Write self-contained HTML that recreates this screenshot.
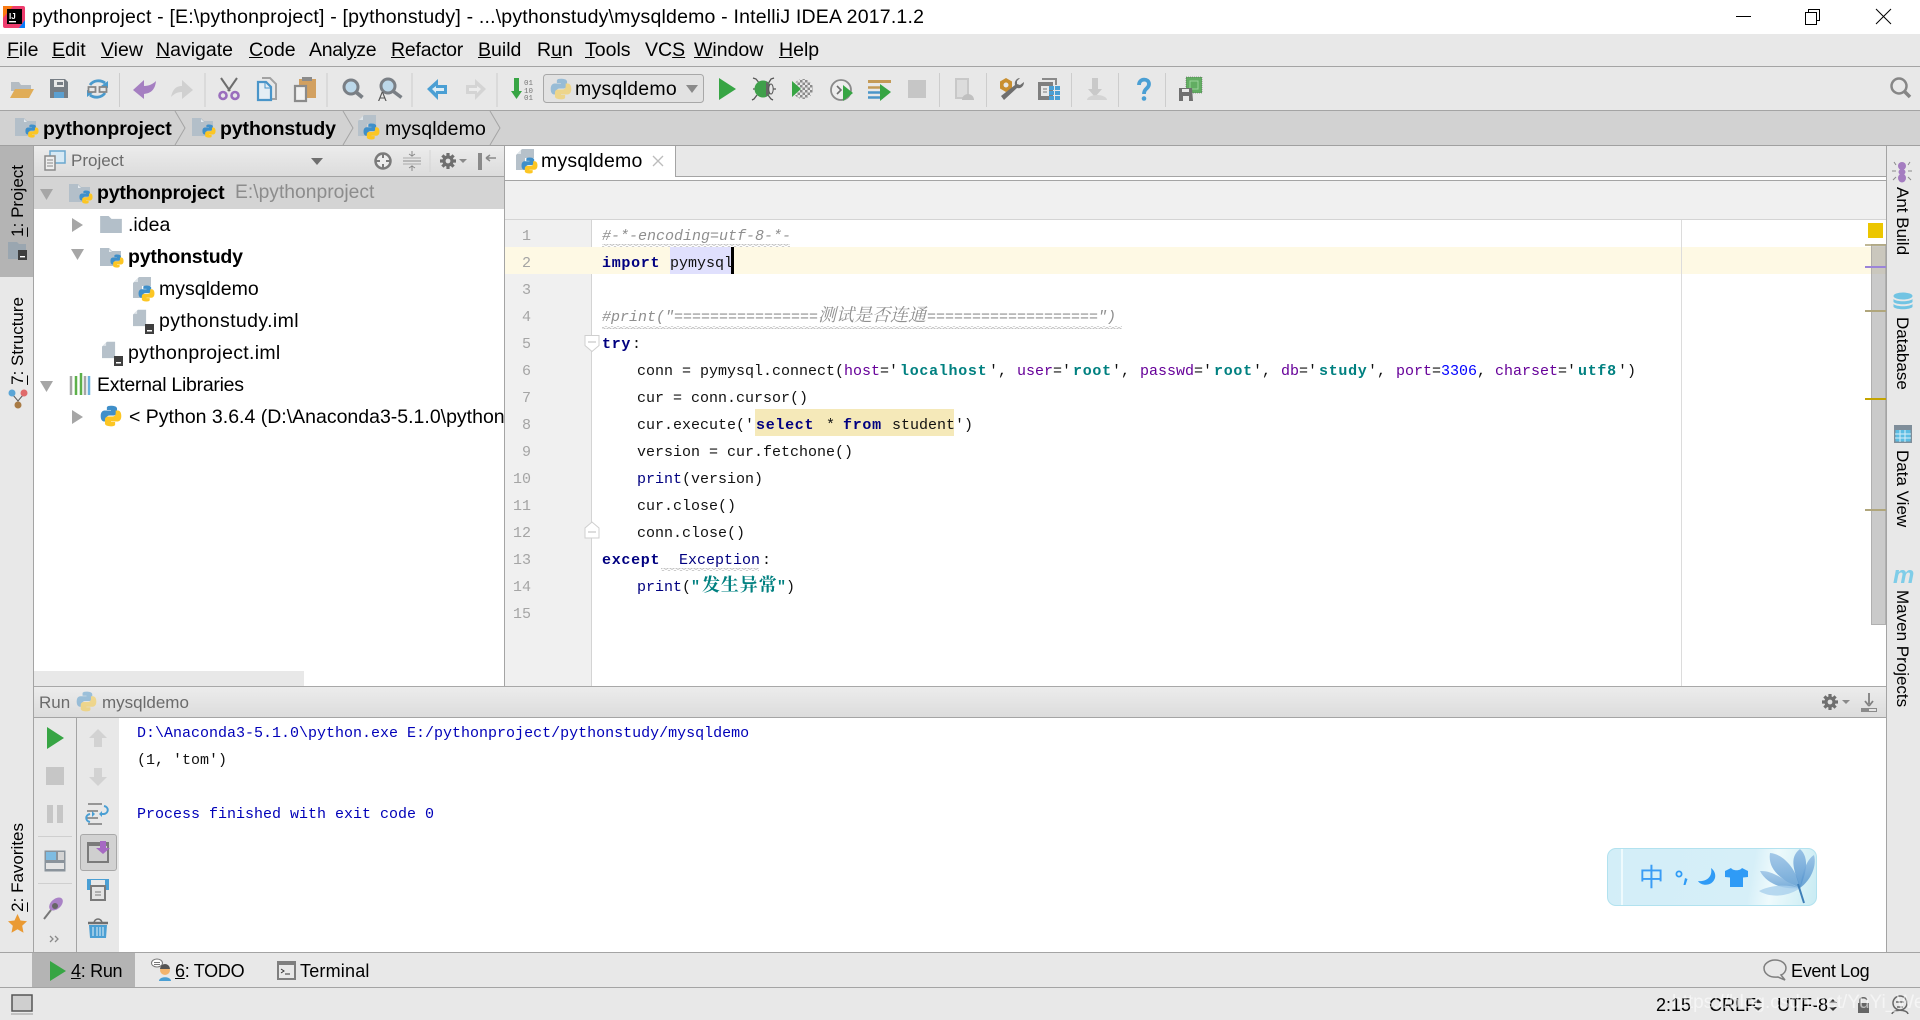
<!DOCTYPE html>
<html><head><meta charset="utf-8"><title>pythonproject</title>
<style>
html,body{margin:0;padding:0;width:1920px;height:1020px;overflow:hidden;background:#e8e8e8}
#a{position:absolute;left:0;top:0;width:1920px;height:1020px;overflow:hidden;font-family:"Liberation Sans","Noto Sans CJK SC",sans-serif;color:#000}
.x{position:absolute}
.t{position:absolute;white-space:pre;font-size:19.5px;line-height:26px;height:26px}
.s{font-size:17px;color:#6b6b6b}
.m{font-size:18px}
.v{position:absolute;white-space:pre;font-size:17px;line-height:20px;writing-mode:vertical-rl}
.vl{transform:rotate(180deg)}
.b{font-weight:bold}
.r{position:absolute;left:0;width:1920px;height:27px}
.r span,.o{position:absolute;white-space:pre;font:15px/27px "Liberation Mono","Noto Serif CJK SC",monospace;color:#111}
.r span{top:2px}
.r .n{color:#a5a5a5;text-align:right;left:500px;width:31px}
.r .k{color:#000080;font-weight:bold;letter-spacing:.7px}
.r .g{color:#008080;font-weight:bold;letter-spacing:.7px}
.r .p{color:#660099}
.r .d{color:#0000ff}
.r .c{color:#8f8f8f;font-style:italic}
.r .f{color:#000080}
.o{color:#0000b8}
u{text-decoration:underline}
</style></head><body><div id="a">

<!-- regions -->
<div class="x" style="left:0;top:0;width:1920px;height:34px;background:#fff"></div>
<div class="x" style="left:0;top:66px;width:1920px;height:1px;background:#a4a4a4"></div>
<div class="x" style="left:0;top:110px;width:1920px;height:1px;background:#a4a4a4"></div>
<div class="x" style="left:0;top:111px;width:1920px;height:34px;background:#d2d2d2"></div>
<div class="x" style="left:0;top:145px;width:1920px;height:1px;background:#a0a0a0"></div>
<!-- left stripe -->
<div class="x" style="left:33px;top:146px;width:1px;height:806px;background:#a4a4a4"></div>
<div class="x" style="left:0;top:146px;width:33px;height:131px;background:#b4b4b4"></div>
<!-- project -->
<div class="x" style="left:34px;top:146px;width:470px;height:30px;background:linear-gradient(#ececec,#dcdcdc)"></div>
<div class="x" style="left:34px;top:176px;width:470px;height:1px;background:#a4a4a4"></div>
<div class="x" style="left:34px;top:177px;width:470px;height:509px;background:#fff"></div>
<div class="x" style="left:34px;top:177px;width:470px;height:32px;background:#d4d4d4"></div>
<div class="x" style="left:34px;top:671px;width:270px;height:15px;background:#e8e8e8"></div>
<div class="x" style="left:504px;top:146px;width:1px;height:540px;background:#a4a4a4"></div>
<!-- editor -->
<div class="x" style="left:505px;top:146px;width:1381px;height:30px;background:#e8e8e8"></div>
<div class="x" style="left:505px;top:176px;width:1381px;height:1px;background:#a4a4a4"></div>
<div class="x" style="left:505px;top:177px;width:1381px;height:3px;background:#fff"></div>
<div class="x" style="left:505px;top:146px;width:170px;height:34px;background:#fff"></div>
<div class="x" style="left:675px;top:146px;width:1px;height:31px;background:#a4a4a4"></div>
<div class="x" style="left:505px;top:180px;width:1381px;height:1px;background:#a4a4a4"></div>
<div class="x" style="left:505px;top:181px;width:1381px;height:38px;background:#f0f0f0"></div>
<div class="x" style="left:505px;top:219px;width:1381px;height:1px;background:#d4d4d4"></div>
<div class="x" style="left:505px;top:220px;width:1381px;height:466px;background:#fff"></div>
<div class="x" style="left:505px;top:220px;width:86px;height:466px;background:#f0f0f0"></div>
<div class="x" style="left:591px;top:220px;width:1px;height:466px;background:#d4d4d4"></div>
<div class="x" style="left:505px;top:247px;width:1381px;height:27px;background:#fef9e4"></div>
<div class="x" style="left:1681px;top:220px;width:1px;height:466px;background:#dcdcdc"></div>
<div class="x" style="left:670px;top:247px;width:61px;height:27px;background:#e0e0fd"></div>
<div class="x" style="left:755px;top:409px;width:199px;height:27px;background:#f5e9b9"></div>
<div class="x" style="left:731px;top:247px;width:3px;height:27px;background:#000"></div>
<!-- scrollbar -->
<div class="x" style="left:1871px;top:244px;width:15px;height:381px;background:rgba(150,150,150,.5);outline:1px solid rgba(130,130,130,.35);outline-offset:-1px"></div>
<div class="x" style="left:1868px;top:223px;width:15px;height:15px;background:#ecc600"></div>
<div class="x" style="left:1865px;top:244px;width:21px;height:2px;background:#b0a67c;opacity:.8"></div>
<div class="x" style="left:1865px;top:266px;width:21px;height:2px;background:#9b84d8"></div>
<div class="x" style="left:1865px;top:310px;width:21px;height:2px;background:#b0a67c"></div>
<div class="x" style="left:1865px;top:398px;width:21px;height:2px;background:#c4a400"></div>
<div class="x" style="left:1865px;top:509px;width:21px;height:2px;background:#b0a67c"></div>
<!-- right stripe -->
<div class="x" style="left:1886px;top:146px;width:1px;height:806px;background:#a4a4a4"></div>
<!-- run -->
<div class="x" style="left:34px;top:686px;width:1852px;height:1px;background:#a8a8a8"></div>
<div class="x" style="left:34px;top:687px;width:1852px;height:30px;background:linear-gradient(#ececec,#dcdcdc)"></div>
<div class="x" style="left:34px;top:717px;width:1852px;height:1px;background:#a4a4a4"></div>
<div class="x" style="left:119px;top:718px;width:1767px;height:234px;background:#fff"></div>
<div class="x" style="left:76px;top:718px;width:1px;height:234px;background:#a4a4a4"></div>
<div class="x" style="left:38px;top:836px;width:34px;height:1px;background:#cfcfcf"></div>
<div class="x" style="left:38px;top:883px;width:34px;height:1px;background:#cfcfcf"></div>
<div class="x" style="left:80px;top:834px;width:35px;height:35px;background:#d2d2d2;border:1px solid #a8a8a8;border-radius:3px"></div>
<!-- bottom -->
<div class="x" style="left:0;top:952px;width:1920px;height:1px;background:#a4a4a4"></div>
<div class="x" style="left:32px;top:953px;width:103px;height:34px;background:#b4b4b4"></div>
<div class="x" style="left:0;top:987px;width:1920px;height:1px;background:#a4a4a4"></div>

<!-- IME -->
<div class="x" style="left:1607px;top:848px;width:208px;height:56px;border:1px solid #b2e2ef;border-radius:9px;background:linear-gradient(100deg,#d3eef8 0%,#d6eff8 68%,#eefafc 78%,#c8ebf3 100%);overflow:hidden">
  <div class="x" style="left:13px;top:0;width:2px;height:56px;background:#eefafd"></div>
</div>

<!-- ICONS -->
<svg class="x" style="left:0;top:0" width="1920" height="1020" viewBox="0 0 1920 1020">
<defs>
<symbol id="py" viewBox="0 0 16 16">
  <path fill="#3f8fc9" d="M7.9.5C4.7.5 5 1.9 5 1.9V3.6H8V4H3.4S.5 3.800.5 8s2.600 4 2.600 4H4.600V10.100S4.500 7.600 7 7.600h3.100s2.300 0 2.300-2.300V2.600S12.700.5 7.900.5Z"/>
  <path fill="#fcc624" transform="rotate(180 8 8)" d="M7.900.5C4.700.5 5 1.900 5 1.900V3.600H8V4H3.400S.5 3.800.5 8s2.600 4 2.600 4H4.600V10.100S4.500 7.600 7 7.600h3.100s2.300 0 2.300-2.300V2.600S12.700.5 7.900.5Z"/>
</symbol>
<symbol id="fo" viewBox="0 0 23 18"><path fill="#b3bfc9" d="M0 0h9l3 3h11v15H0z"/></symbol>
<symbol id="fpy" viewBox="0 0 24 20">
  <path fill="#b3bfc9" d="M0 0h9l3 3h9v12h-6v3H0z"/><path fill="#e6ebef" d="M9 1l3 3H9z"/>
  <use href="#py" x="10" y="6" width="14" height="14"/>
</symbol>
<symbol id="fi" viewBox="0 0 22 25">
  <path fill="#b6c1ca" d="M6 0h10v20H0V6z"/><path fill="#dfe5e9" d="M5 1v4H1z"/>
</symbol>
<symbol id="fipy" viewBox="0 0 22 25">
  <path fill="#b6c1ca" d="M6 0h12v9H9v12H0V6z"/><path fill="#dfe5e9" d="M5 1v4H1z"/>
  <use href="#py" x="5" y="8" width="17" height="17"/>
</symbol>
<symbol id="iml" viewBox="0 0 22 25">
  <use href="#fi" width="18" height="22"/>
  <rect x="12" y="15" width="9" height="10" fill="#3f3f3f"/><rect x="14" y="21" width="5" height="1.500" fill="#fff"/>
</symbol>
<symbol id="gear" viewBox="0 0 20 20">
  <circle cx="10" cy="10" r="7" fill="#6f6f6f"/>
  <path d="M10 0v20M0 10h20M3 3l14 14M17 3L3 17" stroke="#6f6f6f" stroke-width="4"/>
  <circle cx="10" cy="10" r="3" fill="#e2e2e2"/>
</symbol>
<pattern id="sq" width="6" height="3" patternUnits="userSpaceOnUse"><path d="M0 2.500 3 .5 6 2.500" fill="none" stroke="#bdbdbd"/></pattern>
<pattern id="chk" width="5" height="5" patternUnits="userSpaceOnUse"><rect width="2.500" height="2.500" fill="#8a8a8a"/><rect x="2.500" y="2.500" width="2.500" height="2.500" fill="#8a8a8a"/></pattern>
<linearGradient id="pe" x1="0" y1="0" x2="0" y2="1"><stop offset="0" stop-color="#8db9e2"/><stop offset="1" stop-color="#4d8fcc"/></linearGradient>
<linearGradient id="sc" x1="0" y1="0" x2="0" y2="1"><stop offset="0" stop-color="#6fb0dc"/><stop offset="1" stop-color="#3d8ec4"/></linearGradient>
</defs>

<!-- app icon -->
<rect x="3" y="6" width="22" height="22" rx="2" fill="#ee3d6e"/><path d="M3 6h10L3 18z" fill="#f97a12"/><path d="M25 6v14l-6 8h6z" fill="#087cfa"/>
<rect x="7" y="9" width="15" height="15" fill="#000"/><rect x="9" y="21" width="7" height="1.400" fill="#fff"/>
<text x="9" y="19" font-family="Liberation Sans,sans-serif" font-size="8" font-weight="bold" fill="#fff">IJ</text>
<!-- window controls -->
<path d="M1736 16.500h15" stroke="#000" stroke-width="1"/>
<path d="M1805.500 12.500h11v12h-11zM1808.500 12V9.500h11v11h-3" fill="none" stroke="#000"/>
<path d="M1876 9l15 15M1891 9l-15 15" stroke="#000" stroke-width="1"/>

<!-- toolbar seps -->
<g stroke="#cdcdcd"><path d="M119.500 73v34M205 73v34M327 73v34M412 73v34M497 73v34M939.500 73v34M986.500 73v34M1071.500 73v34M1118.500 73v34M1165.500 73v34"/></g>
<!-- open -->
<path fill="#b4bcc3" d="M11 82h8l2 3h10v6H11z"/><path fill="#e0ad58" d="M15 89h19l-5 9H10z"/>
<!-- save -->
<path fill="#767d84" d="M50 79h15l3 3v16H50z"/><rect x="54" y="80" width="10" height="7" fill="#e8e8e8"/><rect x="57" y="82" width="6" height="3" fill="#767d84"/><rect x="54" y="92" width="10" height="6" fill="#5b9fd0"/>
<!-- sync -->
<path d="M90 85a10 9 0 0 1 15-2M105 93a10 9 0 0 1-15 2" fill="none" stroke="#4a9acd" stroke-width="2.800"/><path d="M101 86l7-5v7zM94 92l-7 5v-7z" fill="#4a9acd"/><path d="M88.500 87h7v5h-7zM99.500 87h7v5h-7z" fill="#e8e8e8" stroke="#858585" stroke-width="1.800"/>
<!-- undo/redo -->
<path fill="#a57fc1" d="M133 90l11-10v6c5 0 9-2 12-5-1 9-5 12-12 13v5z"/>
<path fill="#d0d0d0" d="M193 90l-11-10v6c-6 0-9 3-11 11 3-3 6-5 11-5v7z"/>
<!-- cut -->
<path d="M221 78l9 13M237 78l-9 13" stroke="#6d6d6d" stroke-width="2"/><circle cx="223" cy="95.500" r="3.500" fill="#e8e8e8" stroke="#9a6ebd" stroke-width="2.600"/><circle cx="235" cy="95.500" r="3.500" fill="#e8e8e8" stroke="#9a6ebd" stroke-width="2.600"/>
<!-- copy -->
<path d="M262 78h8l6 6v15h-6" fill="#e8e8e8" stroke="#a2a2a2" stroke-width="2"/><path d="M258 82h8l5 5v13h-13z" fill="#e4eef5" stroke="#4a95c9" stroke-width="2.200"/><path d="M265 82v6h6" fill="none" stroke="#4a95c9"/>
<!-- paste -->
<path d="M299 79h17v19h-17z" fill="#d2a060"/><rect x="302" y="77" width="10" height="4" fill="#8b8b8b"/><path d="M295 86h11v15h-11z" fill="#f1f1f1" stroke="#8b8b8b" stroke-width="2.200"/>
<!-- find/replace -->
<circle cx="351" cy="87" r="7" fill="#bcd8ea" stroke="#7a7f85" stroke-width="3"/><path d="M356.500 92.500l6 5" stroke="#7a7f85" stroke-width="3.800"/>
<circle cx="388" cy="86" r="7" fill="#bcd8ea" stroke="#7a7f85" stroke-width="3"/><path d="M393.500 91.500l8 6" stroke="#7a7f85" stroke-width="3.500"/><text x="378" y="101" font-size="13" fill="#555" font-family="Liberation Sans,sans-serif">A</text>
<!-- nav -->
<path fill="#4a9fd4" d="M427 89l11-10v6h9v9h-9v6z"/><path fill="#dcedf6" d="M432 89l4-3v2h8v3h-8v2z"/>
<path fill="#d4d4d4" d="M486 89l-11-10v6h-9v9h9v6z"/><path fill="#ececec" d="M481 89l-4-3v2h-8v3h8v2z"/>
<!-- update -->
<path fill="#37a544" d="M514 78h5v13h3l-5.500 8-5.500-8h3z"/>
<text x="524" y="85" font-size="7.500" fill="#777" font-family="Liberation Mono,monospace">01</text><text x="524" y="93" font-size="7.500" fill="#777" font-family="Liberation Mono,monospace">10</text><text x="524" y="100" font-size="7.500" fill="#777" font-family="Liberation Mono,monospace">01</text>
<!-- combo -->
<rect x="543.500" y="74.500" width="160" height="28" rx="3" fill="#e2e2e2" stroke="#a8a8a8"/>
<g opacity=".45"><use href="#py" x="550" y="78" width="22" height="22"/></g>
<path d="M686 85h12l-6 8z" fill="#8a8a8a"/>
<!-- run group -->
<path fill="#37a544" d="M719 78l17 11-17 11z"/>
<path d="M760 84l-4-5-3-1M768 84l3-5 3-1M755 89h-2M771 89h5M757 95l-3 4-2 1M768 95l3 4 2 1" fill="none" stroke="#555" stroke-width="1.300"/>
<circle cx="763" cy="89" r="8.500" fill="#3fa04a"/><path d="M766 81.500a8.500 8.500 0 0 1 0 15z" fill="#666"/><ellipse cx="771" cy="89" rx="2.200" ry="5" fill="#e8e8e8" stroke="#555"/>
<circle cx="803" cy="89" r="10" fill="url(#chk)"/><path fill="#37a544" d="M792 81l9 8-9 8z"/>
<circle cx="841" cy="90" r="10" fill="#ededed" stroke="#8a8a8a" stroke-width="1.800"/><path d="M837 86l4 4-4 4" fill="none" stroke="#6d6d6d" stroke-width="1.600"/><path fill="#37a544" d="M843 85l10 8-10 8z"/>
<path d="M868 81.500h23" stroke="#c49a56" stroke-width="3"/><path d="M868 87.500h15" stroke="#c49a56" stroke-width="2.500"/><path d="M868 92.500h15" stroke="#4a95c9" stroke-width="2.500"/><path d="M868 97.500h15" stroke="#4a95c9" stroke-width="2.500"/><path fill="#37a544" d="M880 84l11 8-11 9z"/>
<rect x="908" y="80" width="18" height="18" fill="#c6c6c6"/>
<!-- android -->
<path d="M956 79h12v19h-12z" fill="#dcdcdc" stroke="#c8c8c8" stroke-width="2"/><path d="M962 100a6 6 0 0 1 12 0z" fill="#c0c0c0"/>
<!-- wrench -->
<path fill="#c98f30" d="M1006 78l6 3.500v7l-6 3.500-6-3.500v-7z"/><circle cx="1006" cy="85" r="2.500" fill="#e8e8e8"/><path d="M1020 78c-3 0-6 3-5 7l-14 11 3 4 13-12c4 1 7-2 7-6l-4 3-3-1v-3z" fill="#6f6f6f"/>
<!-- sdk -->
<rect x="1038" y="82" width="15" height="18" fill="#7f7f7f"/><path d="M1042 79h14v6" fill="none" stroke="#8a8a8a" stroke-width="2"/><rect x="1041" y="86" width="8" height="10" fill="#e8e8e8"/><path d="M1043 89h4M1043 92h4" stroke="#777"/><g fill="#4a9fd4"><rect x="1049" y="86" width="5" height="4"/><rect x="1055" y="86" width="5" height="4"/><rect x="1049" y="91" width="5" height="4"/><rect x="1055" y="91" width="5" height="4"/><rect x="1049" y="96" width="5" height="4"/><rect x="1055" y="96" width="5" height="4"/></g>
<!-- sdk download -->
<path fill="#c9c9c9" d="M1092 78h6v11h4l-7 8-7-8h4z"/><path d="M1087 100a10 5 0 0 1 20 0z" fill="#d4d4d4"/>
<path d="M1139 85c0-7 10-7 10-1 0 5-5 4-5 10" fill="none" stroke="#4a9fd4" stroke-width="3.800"/><circle cx="1144" cy="98.500" r="2.300" fill="#4a9fd4"/>
<!-- device -->
<rect x="1186" y="77" width="16" height="16" fill="#62ad62" stroke="#555" stroke-width=".5" stroke-dasharray="1 1"/><rect x="1190" y="81" width="8" height="8" fill="none" stroke="#9bd49b"/>
<path fill="#6f6f6f" d="M1179 88h13l1 13h-14z"/><rect x="1183" y="96" width="6" height="5" fill="#e8e8e8"/><rect x="1182" y="89" width="7" height="3" fill="#e8e8e8"/>
<!-- search -->
<circle cx="1899" cy="86" r="7.500" fill="none" stroke="#868686" stroke-width="2.500"/><path d="M1904 91l6 6" stroke="#868686" stroke-width="3.500"/>

<!-- breadcrumb -->
<use href="#fpy" x="15" y="118" width="24" height="20"/>
<use href="#fpy" x="192" y="118" width="24" height="20"/>
<use href="#fipy" x="358" y="115" width="22" height="25"/>
<path d="M175 111l10 17-10 17M343 111l10 17-10 17M490 111l10 17-10 17" fill="none" stroke="#a4a4a4"/>
<!-- project header -->
<rect x="50" y="151" width="15" height="12" fill="#d6e9f5" stroke="#6aa8cf" stroke-width="1.500"/><rect x="45" y="156" width="10" height="14" fill="#eee" stroke="#8a8a8a" stroke-width="1.500"/><path d="M47 160h6M47 163h6M47 166h6" stroke="#888"/>
<path d="M311 158h12l-6 7z" fill="#6f6f6f"/>
<circle cx="383" cy="161" r="7.500" fill="#eee" stroke="#7b7b7b" stroke-width="2.500"/><path d="M383 153v5M383 164v5M375 161h5M386 161h5" stroke="#7b7b7b" stroke-width="2"/>
<path d="M403 161h18" stroke="#8a8a8a"/><path d="M403 158h18M403 164h18" stroke="#aaa"/><path d="M412 151v5l-3-2M412 151v5l3-2M412 171v-5l-3 2M412 171v-5l3 2" stroke="#888" fill="none"/>
<path d="M430 150v22" stroke="#d4d4d4"/>
<use href="#gear" x="440" y="153" width="16" height="16"/><path d="M459 159h8l-4 4z" fill="#8a8a8a"/>
<rect x="478" y="153" width="4" height="17" fill="#8a8a8a"/><path d="M486 158h10M486 158l4-3M486 158l4 3" stroke="#8a8a8a" stroke-width="1.500"/>
<!-- left stripe icons -->
<path fill="#9aa6b0" d="M8 242h9l2 2h7v12h-7v3H8z"/><rect x="18" y="250" width="9" height="10" fill="#3f3f3f"/><rect x="20" y="256" width="5" height="1.400" fill="#fff"/>
<path d="M13 395l5 6 5-6M18 401v5" stroke="#5a5a5a" fill="none"/><circle cx="12" cy="393" r="3.500" fill="#5aa5d6"/><circle cx="24" cy="393" r="3.500" fill="#e06a6a"/><circle cx="18" cy="405" r="3.500" fill="#a97b45"/>
<path fill="#ea9a33" d="M17.500 914l3 6.500 6.500.7-4.800 4.500 1.300 7-6-3.500-6 3.500 1.300-7-4.800-4.500 6.500-.7z"/>
<!-- tree arrows -->
<g fill="#a6a6a6"><path d="M40 189h13l-6.500 11zM40 381h13l-6.500 11z"/><path d="M71 249h13l-6.500 11z"/>
<path d="M72 218l11 7-11 7zM72 410l11 7-11 7z"/></g>
<!-- tree icons -->
<use href="#fpy" x="69" y="184" width="24" height="20"/>
<use href="#fo" x="100" y="216" width="22" height="17"/>
<use href="#fpy" x="100" y="248" width="24" height="20"/>
<use href="#fipy" x="133" y="277" width="22" height="25"/>
<use href="#iml" x="133" y="309" width="22" height="25"/>
<use href="#iml" x="102" y="341" width="22" height="25"/>
<g stroke-width="2.500"><path d="M71 376v19" stroke="#a6a6a6"/><path d="M76 376v19" stroke="#5db04a"/><path d="M81 373v22" stroke="#5db04a"/><path d="M85 376v19" stroke="#a6a6a6"/><path d="M89 376v19" stroke="#6ab0dd"/></g>
<use href="#py" x="100" y="405" width="22" height="22"/>
<!-- tab icon -->
<use href="#fipy" x="516" y="149" width="22" height="25"/>
<path d="M653 156l10 10M663 156l-10 10" stroke="#bcbcbc" stroke-width="1.300"/>
<!-- squiggles -->
<rect x="602" y="244" width="188" height="3" fill="url(#sq)"/>
<rect x="602" y="326" width="520" height="3" fill="url(#sq)"/>
<rect x="661" y="568" width="98" height="3" fill="url(#sq)"/>
<!-- fold marks -->
<path d="M585 335.500h14v10l-7 6-7-6z" fill="#fff" stroke="#cfcfcf"/><path d="M588 342h8" stroke="#bbb"/>
<path d="M585 538h14v-10l-7-6-7 6z" fill="#fff" stroke="#cfcfcf"/><path d="M588 532h8" stroke="#bbb"/>

<!-- right stripe icons -->
<g stroke="#8a8a8a"><path d="M1896 165l-2-3M1908 165l2-3M1896 171h-4M1908 171h4M1896 177l-3 3M1908 177l3 3"/></g>
<ellipse cx="1902" cy="166" rx="4" ry="4" fill="#a47cc0"/><ellipse cx="1902" cy="172" rx="3.500" ry="3" fill="#a47cc0"/><ellipse cx="1902" cy="178" rx="4" ry="4.500" fill="#a47cc0"/>
<g fill="#72c4e3"><ellipse cx="1903" cy="296" rx="9.500" ry="3.500"/><path d="M1893.500 299c3 3 16 3 19 0v3c-3 3-16 3-19 0zM1893.500 304c3 3 16 3 19 0v3c-3 3-16 3-19 0z"/></g>
<rect x="1894" y="425" width="18" height="18" fill="#7f8e9a"/><rect x="1895.500" y="430" width="15" height="11.500" fill="#5cbde3"/><path d="M1895 434h16M1895 438h16M1900 430v12M1905 430v12" stroke="#d7eff8"/>
<text x="1893" y="583" font-size="24" font-style="italic" font-weight="bold" fill="#7fcde8" font-family="Liberation Sans,sans-serif">m</text>

<!-- run header -->
<g opacity=".45"><use href="#py" x="76" y="691" width="21" height="21"/></g>
<use href="#gear" x="1822" y="694" width="16" height="16"/><path d="M1842 700h8l-4 4z" fill="#8a8a8a"/>
<path d="M1869 693v11M1869 706l-4-5M1869 706l4-5" stroke="#808080" stroke-width="1.800"/><rect x="1861" y="708" width="16" height="4" fill="#8a8a8a"/><rect x="1869" y="709" width="7" height="2" fill="#e4e4e4"/>
<!-- run toolbar col1 -->
<path fill="#37a544" d="M47 727l17 11-17 11z"/>
<rect x="46" y="767" width="18" height="18" fill="#c6c6c6"/>
<rect x="47" y="805" width="6" height="18" fill="#c6c6c6"/><rect x="57" y="805" width="6" height="18" fill="#c6c6c6"/>
<rect x="44.500" y="850.500" width="21" height="21" fill="#8a939b"/><rect x="46" y="852" width="10" height="8" fill="#7ebce2"/><rect x="58" y="852" width="6" height="8" fill="#d4d4d4"/><rect x="46" y="863" width="18" height="6" fill="#e4e4e4"/>
<ellipse cx="56" cy="904" rx="8" ry="5" fill="#a982c6" transform="rotate(-42 56 904)"/><circle cx="55" cy="906" r="3" fill="#666"/><path d="M51 910l-7 9" stroke="#777" stroke-width="2"/>
<path d="M50 936l3 3-3 3M55 936l3 3-3 3" fill="none" stroke="#8a8a8a" stroke-width="1.300"/>
<!-- col2 -->
<path fill="#d2d2d2" d="M98 729l9 9h-5v9h-8v-9h-5z"/>
<path fill="#d2d2d2" d="M98 786l9-9h-5v-9h-8v9h-5z"/>
<path d="M88 804h14M87 811h11M87 818h11M88 824h14" stroke="#7a7a7a" stroke-width="1.500"/><path d="M104 806c5 1 5 7 0 8l-2 0M90 822c-5-1-5-7 0-8" fill="none" stroke="#4a9fd4" stroke-width="2"/><path d="M102 811v6l-3-3zM92 811v6l3-3z" fill="#4a9fd4"/>
<rect x="88" y="843" width="20" height="19" fill="#cfcfcf" stroke="#7a7a7a" stroke-width="2"/><path d="M88 844h20" stroke="#7a7a7a" stroke-width="4"/><path d="M100 841h6v7h4l-7 6-7-6h4z" fill="#a669c3"/>
<rect x="87" y="879" width="22" height="11" fill="#4a9fd4"/><rect x="91" y="880" width="14" height="5" fill="#e8e8e8"/><rect x="91" y="886" width="14" height="14" fill="#e4e4e4" stroke="#7a7a7a" stroke-width="2"/><path d="M95 892h6M95 895h6" stroke="#7a7a7a"/>
<path d="M88 923h20" stroke="#6f6f6f" stroke-width="2.500"/><path d="M94 923a4 4 0 0 1 8 0" fill="none" stroke="#6f6f6f" stroke-width="1.500"/><path d="M89 925h18l-1 13H90z" fill="#4a9fd4"/><path d="M93 927v9M97 927v9M100 927v9M103 927v9" stroke="#e4f0f8"/>
<!-- ime -->
<g fill="#2f9bf6"><circle cx="1679" cy="874" r="2.600" fill="none" stroke="#2f9bf6" stroke-width="1.800"/><path d="M1685 878l2.500 1-2 6h-2z"/>
<path d="M1711 868c2 9-5 14-13 13 3 5 14 6 17-3 1-4-1-8-4-10z"/>
<path d="M1725 871l6-3c2 3 9 3 11 0l6 3 0 6-5 .5v9.500h-13v-9.500l-5-.5z"/></g>
<g>
<path d="M1800 888C1786 882 1767 872 1770 853C1784 854 1797 870 1800 888Z" fill="url(#pe)" opacity=".75"/>
<path d="M1800 888C1795 872 1788 858 1800 849C1810 858 1806 874 1800 888Z" fill="url(#pe)" opacity=".85"/>
<path d="M1800 888C1802 874 1806 860 1814 855C1817 866 1811 880 1800 888Z" fill="url(#pe)" opacity=".8"/>
<path d="M1800 888C1788 884 1775 870 1760 871C1767 885 1786 890 1800 888Z" fill="url(#pe)" opacity=".7"/>
<path d="M1800 888C1786 884 1770 885 1759 891C1770 898 1788 897 1800 888Z" fill="#a9cfec" opacity=".8"/>
<path d="M1798 884l6 19" stroke="#3f7fb8" stroke-width="2"/>
</g>

<!-- bottom icons -->
<path fill="#37a544" d="M50 961l16 10-16 10z"/>
<ellipse cx="157" cy="963" rx="5.500" ry="4" fill="#fff" stroke="#777"/><path d="M154 962.500h6M154 964.500h6" stroke="#777"/>
<circle cx="165" cy="970" r="5" fill="#f2b46e"/><path d="M160 969a5 5 0 0 1 10 0z" fill="#555"/><path d="M159 981c0-5 12-5 12 0z" fill="#4a9fd4"/>
<rect x="277" y="961" width="19" height="19" fill="#7f7f7f"/><rect x="279" y="965" width="15" height="13" fill="#e9e9e9"/><path d="M281 969l3 2-3 2M285 974h5" stroke="#333" fill="none"/>
<path d="M1775 960c7 0 11 4 11 8 0 3-2 6-5 7l4 5-7-3c-8 1-14-3-14-9 0-4 5-8 11-8z" fill="none" stroke="#7f7f7f" stroke-width="1.500"/>
<!-- status -->
<rect x="12" y="995" width="20" height="16" fill="#cfcfcf" stroke="#555" stroke-width="1.500"/><path d="M11 1014h22" stroke="#9a9a9a"/>
<path d="M1754 1003l4-4 4 4zM1754 1007l4 4 4-4z" fill="#333"/>
<path d="M1829 1003l4-4 4 4zM1829 1007l4 4 4-4z" fill="#333"/>
<rect x="1858" y="1003" width="11" height="10" fill="#666"/><path d="M1860 1003v-3c0-3 6-3 7 0" stroke="#666" stroke-width="1.500" fill="none"/>
<circle cx="1900" cy="1003" r="7" fill="none" stroke="#666" stroke-width="1.500"/><path d="M1896 1002h8M1897 1007h6M1892 1014c1-5 15-5 16 0" stroke="#666" stroke-width="1.500" fill="none"/>
</svg>

<!-- IME 中 -->
<div class="t" style="left:1639px;top:862px;font-size:25px;line-height:28px;height:28px;color:#3a9cf5;font-family:'Noto Sans CJK SC',sans-serif">中</div>

<!-- title & menu -->
<div class="t" style="left:32px;top:4px;letter-spacing:.19px">pythonproject - [E:\pythonproject] - [pythonstudy] - ...\pythonstudy\mysqldemo - IntelliJ IDEA 2017.1.2</div>
<div class="t" style="left:7px;top:37px"><u>F</u>ile</div>
<div class="t" style="left:52px;top:37px"><u>E</u>dit</div>
<div class="t" style="left:101px;top:37px"><u>V</u>iew</div>
<div class="t" style="left:156px;top:37px"><u>N</u>avigate</div>
<div class="t" style="left:249px;top:37px"><u>C</u>ode</div>
<div class="t" style="left:309px;top:37px;letter-spacing:-.3px">Anal<u>y</u>ze</div>
<div class="t" style="left:391px;top:37px;letter-spacing:-.2px"><u>R</u>efactor</div>
<div class="t" style="left:478px;top:37px"><u>B</u>uild</div>
<div class="t" style="left:537px;top:37px">R<u>u</u>n</div>
<div class="t" style="left:585px;top:37px"><u>T</u>ools</div>
<div class="t" style="left:645px;top:37px">VC<u>S</u></div>
<div class="t" style="left:694px;top:37px"><u>W</u>indow</div>
<div class="t" style="left:779px;top:37px"><u>H</u>elp</div>
<div class="t" style="left:575px;top:76px;letter-spacing:.25px">mysqldemo</div>

<!-- breadcrumb -->
<div class="t b" style="left:43px;top:116px;letter-spacing:-.1px">pythonproject</div>
<div class="t b" style="left:220px;top:116px;letter-spacing:-.1px">pythonstudy</div>
<div class="t" style="left:385px;top:116px;letter-spacing:.15px">mysqldemo</div>

<!-- project -->
<div class="t s" style="left:71px;top:148px">Project</div>
<div class="x" style="left:0;top:0;width:504px;height:686px;overflow:hidden">
<div class="t b" style="left:97px;top:180px;letter-spacing:-.2px">pythonproject</div>
<div class="t" style="left:235px;top:180px;font-size:19.300px;color:#8c8c8c">E:\pythonproject</div>
<div class="t" style="left:128px;top:212px">.idea</div>
<div class="t b" style="left:128px;top:244px;letter-spacing:-.2px">pythonstudy</div>
<div class="t" style="left:159px;top:276px">mysqldemo</div>
<div class="t" style="left:159px;top:308px;letter-spacing:.4px">pythonstudy.iml</div>
<div class="t" style="left:128px;top:340px;letter-spacing:.3px">pythonproject.iml</div>
<div class="t" style="left:97px;top:372px;letter-spacing:-.28px">External Libraries</div>
<div class="t" style="left:129px;top:404px">&lt; Python 3.6.4 (D:\Anaconda3-5.1.0\python.exe)</div>
</div>
<div class="t" style="left:541px;top:148px;letter-spacing:.2px">mysqldemo</div>

<!-- vertical labels -->
<div class="v vl" style="left:8px;top:165px"><u>1</u>: Project</div>
<div class="v vl" style="left:8px;top:297px"><u>7</u>: Structure</div>
<div class="v vl" style="left:8px;top:823px"><u>2</u>: Favorites</div>
<div class="v" style="left:1892px;top:187px">Ant Build</div>
<div class="v" style="left:1892px;top:317px">Database</div>
<div class="v" style="left:1892px;top:450px">Data View</div>
<div class="v" style="left:1892px;top:590px">Maven Projects</div>

<!-- code -->
<div class="r" style="top:221px"><span class="n">1</span><span class="c" style="left:602px">#-*-encoding=utf-8-*-</span></div>
<div class="r" style="top:248px"><span class="n">2</span><span class="k" style="left:602px">import</span><span style="left:670px">pymysql</span></div>
<div class="r" style="top:275px"><span class="n">3</span></div>
<div class="r" style="top:302px"><span class="n">4</span><span class="c" style="left:602px">#print("================</span><span class="c" style="left:818px;font-size:18px">测试是否连通</span><span class="c" style="left:927px">===================")</span></div>
<div class="r" style="top:329px"><span class="n">5</span><span class="k" style="left:602px">try</span><span style="left:632px">:</span></div>
<div class="r" style="top:356px"><span class="n">6</span><span style="left:637px">conn = pymysql.connect(</span><span class="p" style="left:844px">host</span><span style="left:880px">='</span><span class="g" style="left:900px">localhost</span><span style="left:989px">',</span><span class="p" style="left:1017px">user</span><span style="left:1053px">='</span><span class="g" style="left:1073px">root</span><span style="left:1112px">',</span><span class="p" style="left:1140px">passwd</span><span style="left:1194px">='</span><span class="g" style="left:1214px">root</span><span style="left:1253px">',</span><span class="p" style="left:1281px">db</span><span style="left:1299px">='</span><span class="g" style="left:1319px">study</span><span style="left:1368px">',</span><span class="p" style="left:1396px">port</span><span style="left:1432px">=</span><span class="d" style="left:1441px">3306</span><span style="left:1477px">,</span><span class="p" style="left:1495px">charset</span><span style="left:1558px">='</span><span class="g" style="left:1578px">utf8</span><span style="left:1618px">')</span></div>
<div class="r" style="top:383px"><span class="n">7</span><span style="left:637px">cur = conn.cursor()</span></div>
<div class="r" style="top:410px"><span class="n">8</span><span style="left:637px">cur.execute('</span><span class="k" style="left:756px">select</span><span style="left:826px">*</span><span class="k" style="left:843px">from</span><span style="left:892px">student</span><span style="left:955px">')</span></div>
<div class="r" style="top:437px"><span class="n">9</span><span style="left:637px">version = cur.fetchone()</span></div>
<div class="r" style="top:464px"><span class="n">10</span><span class="f" style="left:637px">print</span><span style="left:682px">(version)</span></div>
<div class="r" style="top:491px"><span class="n">11</span><span style="left:637px">cur.close()</span></div>
<div class="r" style="top:518px"><span class="n">12</span><span style="left:637px">conn.close()</span></div>
<div class="r" style="top:545px"><span class="n">13</span><span class="k" style="left:602px">except</span><span class="f" style="left:679px">Exception</span><span style="left:762px">:</span></div>
<div class="r" style="top:572px"><span class="n">14</span><span class="f" style="left:637px">print</span><span style="left:682px">(</span><span class="g" style="left:691px;letter-spacing:0">"</span><span class="g" style="left:702px;font-size:18px;letter-spacing:.9px">发生异常</span><span class="g" style="left:777px;letter-spacing:0">"</span><span style="left:786px">)</span></div>
<div class="r" style="top:599px"><span class="n">15</span></div>

<!-- run -->
<div class="t s" style="left:39px;top:690px">Run</div>
<div class="t s" style="left:102px;top:690px">mysqldemo</div>
<div class="o" style="left:137px;top:720px">D:\Anaconda3-5.1.0\python.exe E:/pythonproject/pythonstudy/mysqldemo</div>
<div class="o" style="left:137px;top:747px;color:#111">(1, 'tom')</div>
<div class="o" style="left:137px;top:801px">Process finished with exit code 0</div>

<!-- bottom -->
<div class="t m" style="left:71px;top:958px;letter-spacing:-.3px"><u>4</u>: Run</div>
<div class="t m" style="left:175px;top:958px;letter-spacing:-.3px"><u>6</u>: TODO</div>
<div class="t m" style="left:300px;top:958px;letter-spacing:.2px">Terminal</div>
<div class="t m" style="left:1791px;top:958px;letter-spacing:-.3px">Event Log</div>
<div class="t m" style="left:1656px;top:992px">2:15</div>
<div class="t m" style="left:1709px;top:992px">CRLF</div>
<div class="t m" style="left:1777px;top:992px">UTF-8</div>
<div class="t" style="left:1672px;top:990px;font-size:19px;color:rgba(255,255,255,.55)">https://blog.csdn.net/YuYi_Weijia</div>

</div></body></html>
